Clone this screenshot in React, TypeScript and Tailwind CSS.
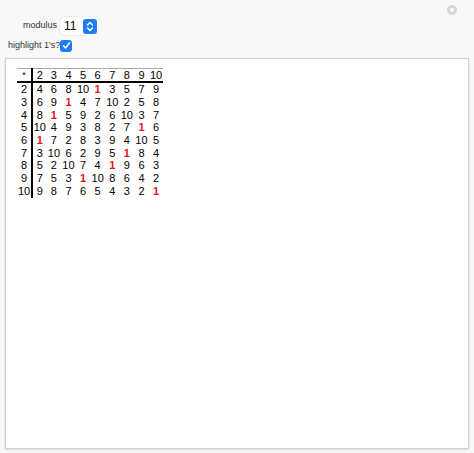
import React from 'react';

const MOD = 11;
const nums = Array.from({ length: MOD - 2 }, (_, i) => i + 2);

const App: React.FC = () => {
  return (
    <div className="w-[474px] h-[453px] bg-[#f8f8f8] relative" style={{ fontFamily: '"Liberation Sans", Arial, sans-serif' }}>
      <div className="absolute right-[17px] top-[5px] w-[10px] h-[10px] rounded-full bg-[#d6d6d6] flex items-center justify-center">
        <div className="w-[4px] h-[4px] rounded-full bg-white" />
      </div>

      <div className="pt-[17px] pl-[8px] flex flex-col gap-[4px]">
        <div className="flex items-center">
          <span className="w-[49px] text-right text-[9px] text-[#333]">modulus</span>
          <div className="ml-[3px] w-[38px] h-[18px] bg-white rounded-[4px] shadow-[0_0_1px_rgba(0,0,0,0.35)] flex items-center justify-between pl-[4px] pr-[1px]">
            <span className="text-[12px] text-black">11</span>
            <div className="w-[14px] h-[15px] rounded-[3px] bg-[#1f7cf4] flex flex-col items-center justify-center gap-[1px]">
              <svg width="8" height="11" viewBox="0 0 8 11" fill="none" stroke="white" strokeWidth="1.4" strokeLinecap="round" strokeLinejoin="round">
                <path d="M1.5 4 L4 1.5 L6.5 4" />
                <path d="M1.5 7 L4 9.5 L6.5 7" />
              </svg>
            </div>
          </div>
        </div>
        <div className="flex items-center">
          <span className="w-[49px] text-right text-[9px] text-[#333] whitespace-nowrap">highlight 1's?</span>
          <div className="ml-[3px] w-[12px] h-[12px] rounded-[3px] bg-[#1f7cf4] flex items-center justify-center">
            <svg width="9" height="9" viewBox="0 0 9 9" fill="none" stroke="white" strokeWidth="1.6" strokeLinecap="round" strokeLinejoin="round">
              <path d="M1.5 4.8 L3.6 7 L7.5 1.8" />
            </svg>
          </div>
        </div>
      </div>

      <div className="mx-[5px] mt-[5px] h-[391px] bg-white border border-[#d0d0d0] shadow-[0_1px_2px_rgba(0,0,0,0.12)] pt-[9px] pl-[11px]">
        <table className="border-collapse text-[11px] text-black" style={{ lineHeight: '12.7px' }}>
          <thead>
            <tr className="border-t border-[#aaa] border-b-2 border-b-black">
              <th className="w-[15px] h-[14px] font-normal text-center border-r-2 border-black text-[9px]">*</th>
              {nums.map((n) => (
                <th key={n} className="w-[14.6px] h-[14px] font-normal text-center">{n}</th>
              ))}
            </tr>
          </thead>
          <tbody>
            {nums.map((r) => (
              <tr key={r}>
                <td className="text-center border-r-2 border-black">{r}</td>
                {nums.map((c) => {
                  const v = (r * c) % MOD;
                  return (
                    <td key={c} className={v === 1 ? 'text-center text-[#e8141a] font-bold' : 'text-center'}>
                      {v}
                    </td>
                  );
                })}
              </tr>
            ))}
          </tbody>
        </table>
      </div>
    </div>
  );
};

export default App;
